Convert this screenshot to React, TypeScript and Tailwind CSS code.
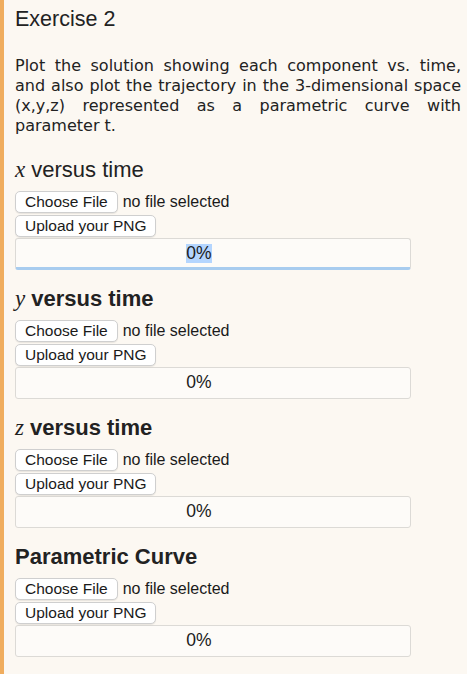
import React from "react";

const sans = "font-['Liberation_Sans',Arial,sans-serif]";

function Section({
  v,
  label,
  bold,
  focused,
  isMath = true,
}: {
  v?: string;
  label: string;
  bold: boolean;
  focused?: boolean;
  isMath?: boolean;
}) {
  return (
    <div className="mt-[17px] first:mt-0">
      <h3 className={`${sans} text-[22px] leading-[24px] text-[#222] ${bold ? "font-bold" : "font-normal"} m-0`}>
        {isMath && (
          <span className="font-['Liberation_Serif',serif] italic font-normal text-[23px] mr-[6px]">{v}</span>
        )}
        {label}
      </h3>
      <div className="mt-[9px] flex items-center h-[22px]">
        <button className={`${sans} h-[22px] px-[9px] text-[15.5px] leading-[20px] text-[#1a1a1a] bg-white border border-[#cfcfcf] rounded-[5px] shadow-[0_1px_1px_rgba(0,0,0,0.08)]`}>
          Choose File
        </button>
        <span className={`${sans} ml-[5px] text-[16px] text-[#1a1a1a]`}>no file selected</span>
      </div>
      <div className="mt-[2px] flex h-[22px]">
        <button className={`${sans} h-[22px] px-[9px] text-[15.5px] leading-[20px] text-[#1a1a1a] bg-white border border-[#cfcfcf] rounded-[5px] shadow-[0_1px_1px_rgba(0,0,0,0.08)]`}>
          Upload your PNG
        </button>
      </div>
      <div
        className={`mt-[1px] w-[396px] h-[32px] bg-[#fdfbf8] border border-[#dcdad6] rounded-[3px] ${
          focused ? "border-b-[3px] border-b-[#a8ccef]" : ""
        } pt-[2px] pr-[28px] text-center`}
      >
        <span
          className={`${sans} inline-block text-[17.5px] leading-[19px] text-[#1a1a1a] ${
            focused ? "bg-[#b4d5fe]" : ""
          }`}
        >
          0%
        </span>
      </div>
    </div>
  );
}

export default function App() {
  return (
    <div className="w-[474px] h-[674px] bg-white overflow-hidden">
      <div className="w-[467px] h-[674px] bg-[#fcf8f2] border-l-[4px] border-[#f0ad5e] pl-[11px] pr-[6px]">
        <h2 className={`${sans} m-0 pt-[5px] text-[21.5px] leading-[28px] font-normal text-[#222]`}>Exercise 2</h2>
        <p className="mt-[23px] mb-0 font-['DejaVu_Sans',Verdana,sans-serif] text-[16px] leading-[20px] text-[#222] text-justify">
          Plot the solution showing each component vs. time, and also plot the trajectory in the 3-dimensional space (x,y,z) represented as a parametric curve with parameter t.
        </p>
        <div className="mt-[22px]">
          <Section v="x" label="versus time" bold={false} focused />
          <Section v="y" label="versus time" bold />
          <Section v="z" label="versus time" bold />
          <Section label="Parametric Curve" bold isMath={false} />
        </div>
      </div>
    </div>
  );
}
